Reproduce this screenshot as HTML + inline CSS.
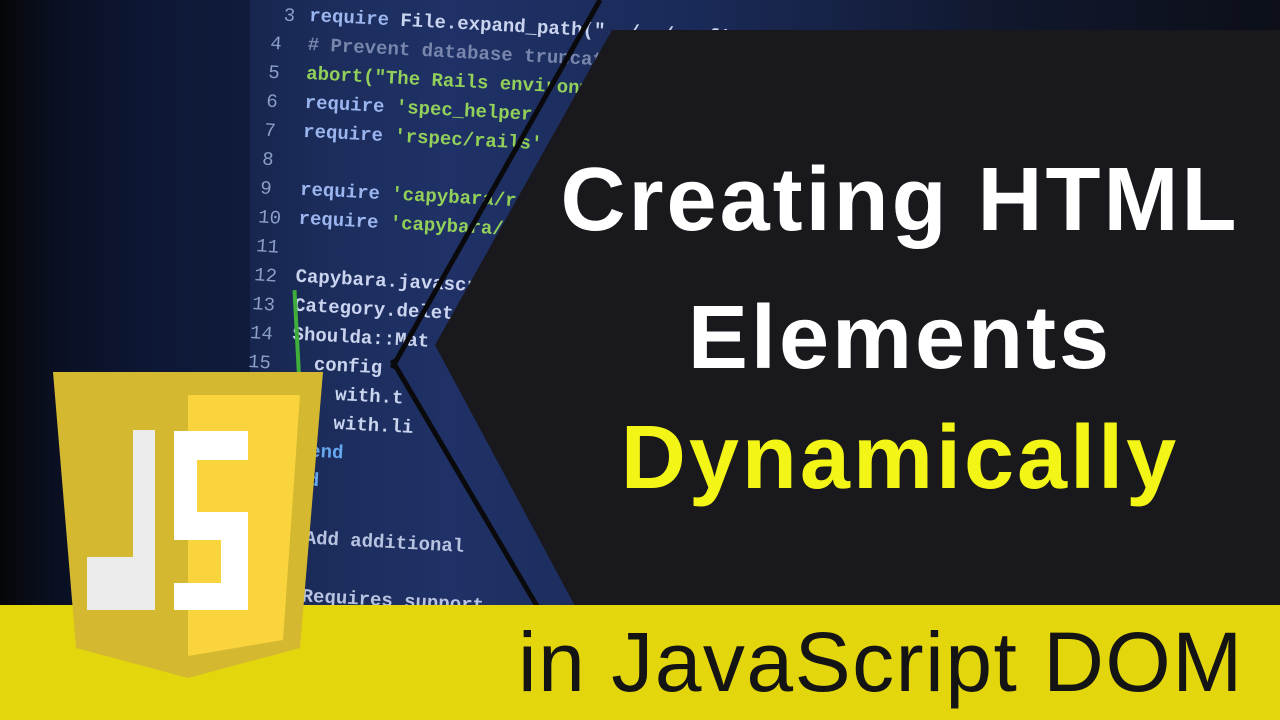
<!DOCTYPE html>
<html><head><meta charset="utf-8"><style>
html,body{margin:0;padding:0}
body{width:1280px;height:720px;overflow:hidden;position:relative;background:#0b0f1e;font-family:"Liberation Sans",sans-serif}
.bg{position:absolute;left:0;top:0;width:1280px;height:720px;
background:linear-gradient(90deg,#050608 0,#0b1020 50px,#122044 150px,#16264f 250px,#1c2d5c 330px,#1f3166 450px,#1a2a58 700px,#11182e 1000px,#0c0f18 1280px)}
.code{position:absolute;font-family:"Liberation Mono",monospace;font-size:19px;font-weight:bold;white-space:pre;line-height:29px;opacity:.9}
.side{position:absolute;left:50px;top:0;width:200px;height:620px;background:rgba(8,14,35,.45)}
.ln{position:absolute;left:262px;top:0;color:#8c9ec8;font-family:"Liberation Mono",monospace;font-size:19px;line-height:29px;white-space:pre;transform:rotate(4deg);transform-origin:0 0}
.t{position:absolute;left:520px;width:760px;text-align:center;font-weight:bold;font-size:90px;letter-spacing:3px;white-space:nowrap;line-height:100px}
</style></head><body>
<div class="bg"></div>
<div class="side"></div>
<div class="ln">  3
 4
 5
 6
 7
 8
 9
 10
 11
 12
 13
 14
 15
 16
 17
 18
 19
 20
 21
 22</div>
<div class="code" style="left:310px;top:2px;color:#dde6ff;transform:rotate(3deg);transform-origin:0 0"><span style="color:#a9c4ff">require</span> File.expand_path("../../config/environment
<span style="color:#8290b5"># Prevent database truncation if the environ</span>
<span style="color:#9fe25a">abort("The Rails environment is running</span>
<span style="color:#a9c4ff">require</span> <span style="color:#9fe25a">'spec_helper'</span>
<span style="color:#a9c4ff">require</span> <span style="color:#9fe25a">'rspec/rails'</span>

<span style="color:#a9c4ff">require</span> <span style="color:#9fe25a">'capybara/rspec'</span>
<span style="color:#a9c4ff">require</span> <span style="color:#9fe25a">'capybara/rails'</span>

Capybara.javascript
Category.delete
Shoulda::Mat
  config
    with.t
    with.li
  <span style="color:#6fb6ff">end</span>
<span style="color:#6fb6ff">end</span>

<span style="color:#c9d4f0"># Add additional</span>

<span style="color:#c9d4f0"># Requires support</span></div>
<div style="position:absolute;left:298px;top:290px;width:4px;height:210px;background:#3fae3a;transform:rotate(-3deg)"></div>
<svg width="1280" height="720" style="position:absolute;left:0;top:0">
<polygon points="612,30 1280,30 1280,606 575,606 435,345" fill="#19181d"/>
<line x1="600" y1="0" x2="392" y2="368" stroke="#0a0a0c" stroke-width="5"/>
<line x1="392" y1="360" x2="537" y2="606" stroke="#0a0a0c" stroke-width="5"/>
<rect x="0" y="605" width="1280" height="115" fill="#e3d60c"/>
<polygon points="53,372 323,372 300,648 188,678 76,648" fill="#d4b830"/>
<polygon points="188,395 300,395 283,640 188,656" fill="#f9d43c"/>
<polygon points="133,430 155,430 155,610 87,610 87,557 133,557" fill="#ebebeb"/>
<polygon points="174,431 248,431 248,460 197,460 197,512 248,512 248,610 174,610 174,583 221,583 221,540 174,540" fill="#ffffff"/>
</svg>
<div class="t" style="top:150px;color:#fff">Creating HTML</div>
<div class="t" style="top:288px;color:#fff">Elements</div>
<div class="t" style="top:408px;color:#f3f516">Dynamically</div>
<div style="position:absolute;left:518px;top:612px;color:#141414;font-size:84px;line-height:100px;letter-spacing:1.5px;white-space:nowrap">in JavaScript DOM</div>
</body></html>
